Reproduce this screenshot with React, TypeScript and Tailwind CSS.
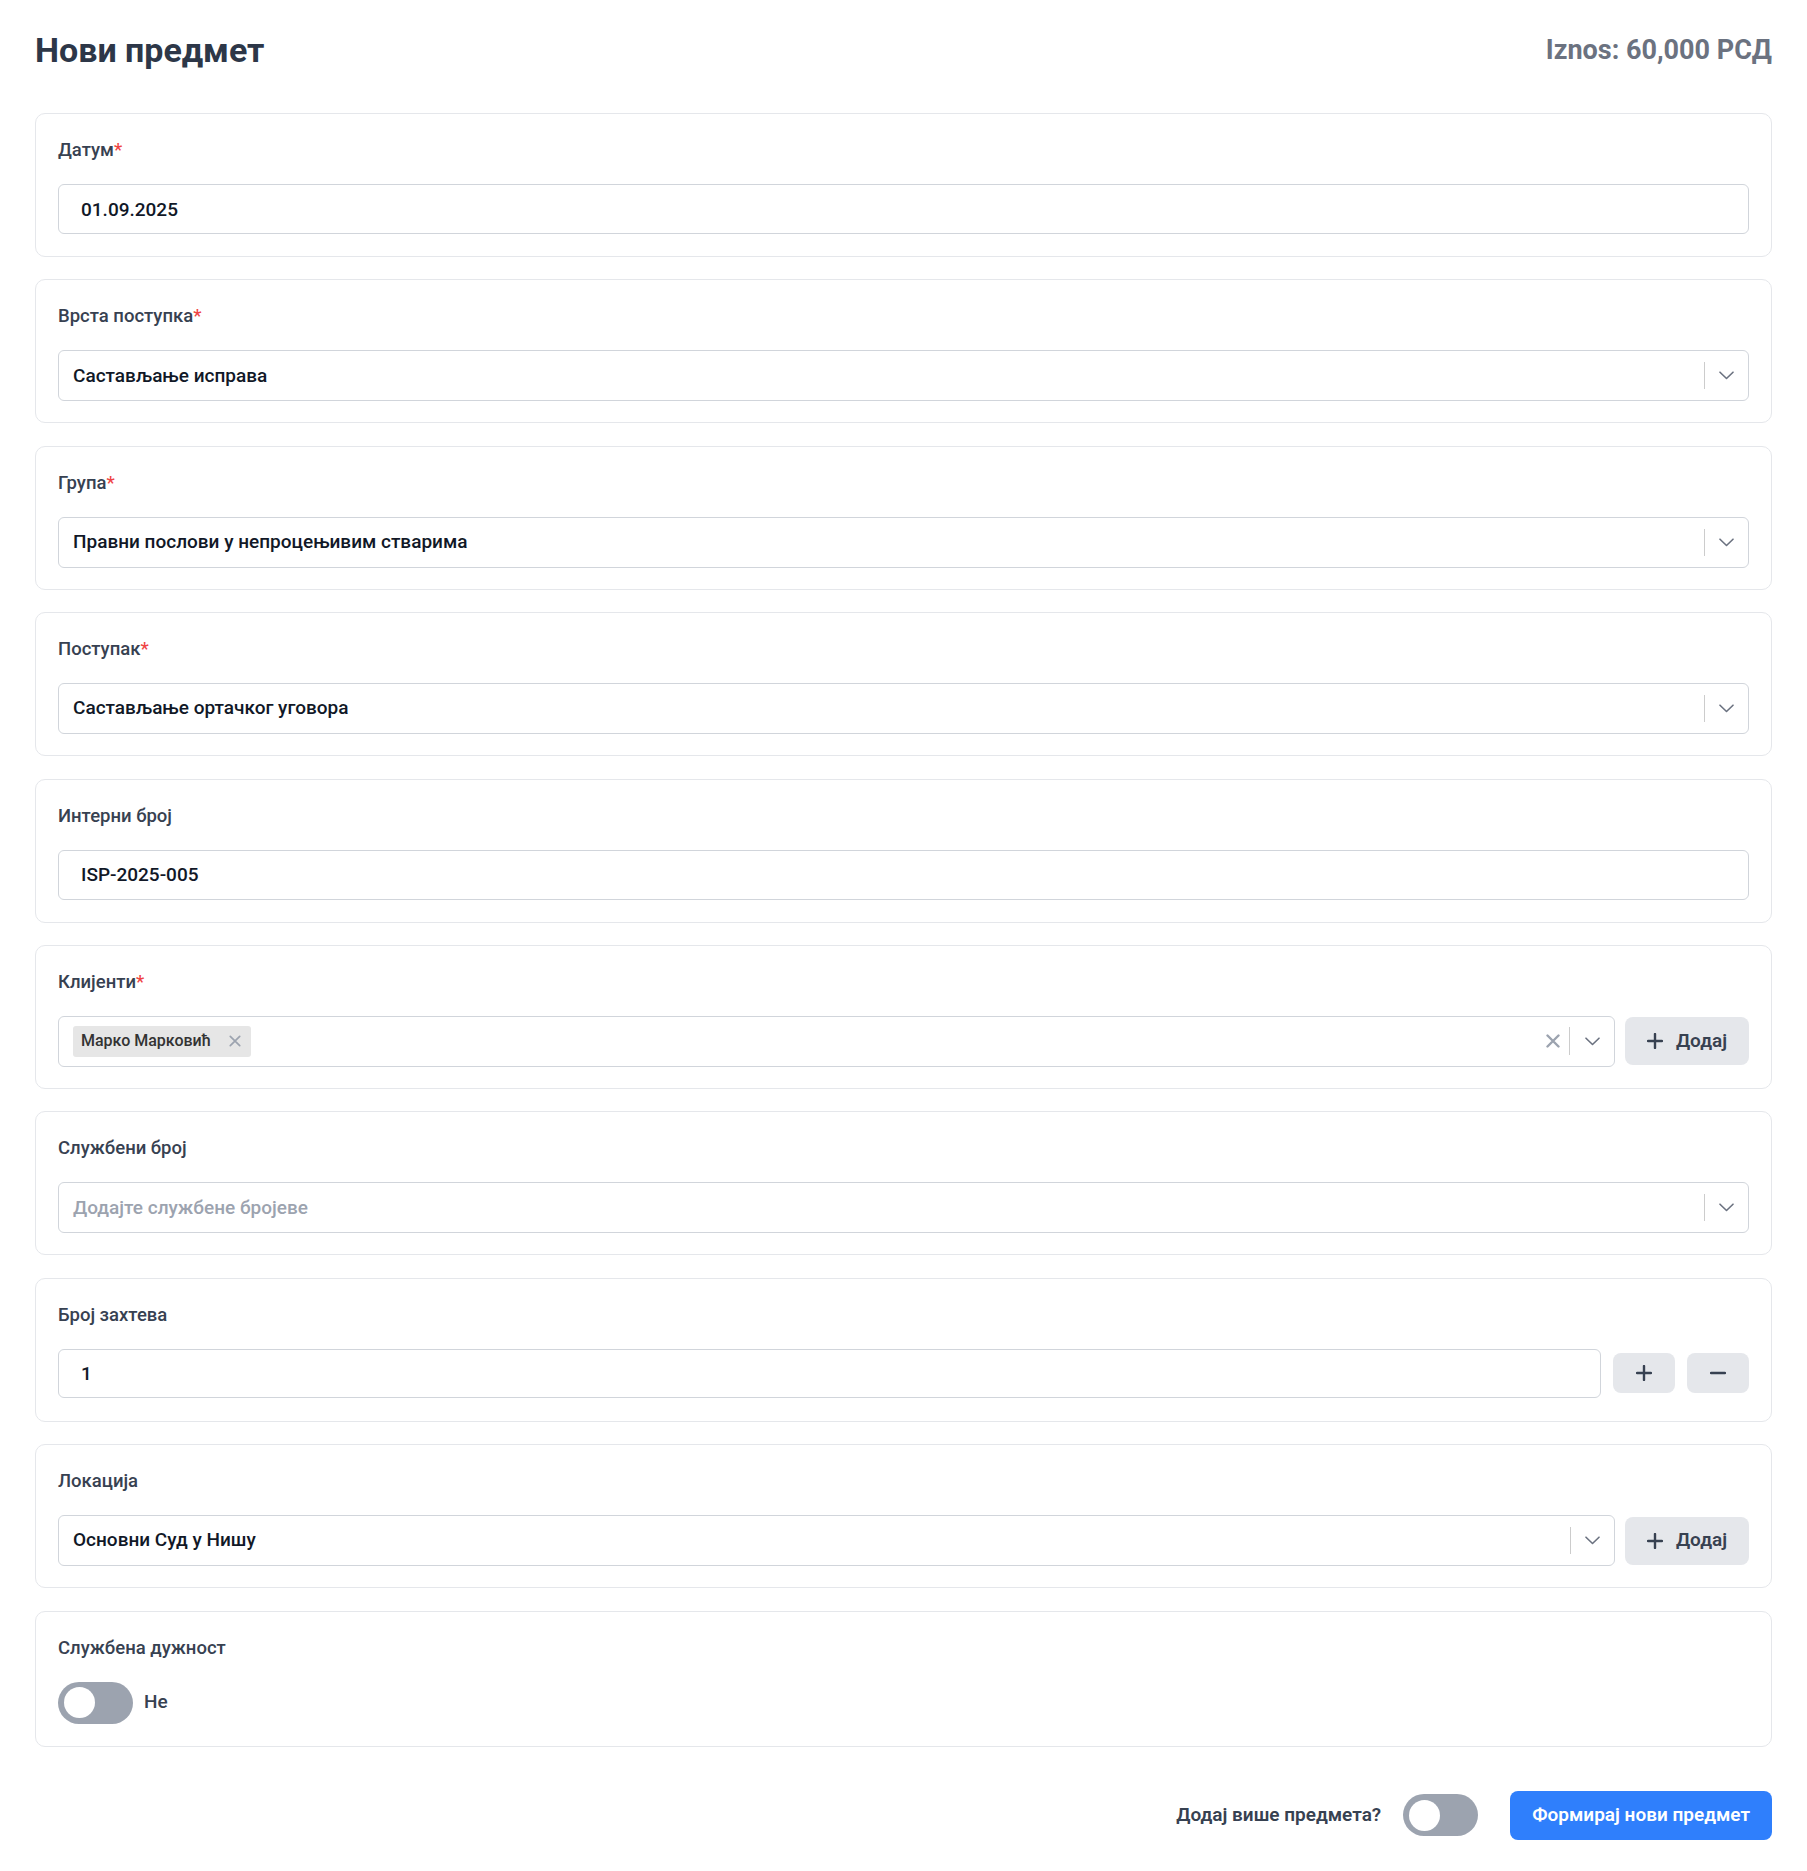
import React from "react";

function Chevron() {
  return (
    <svg width="15" height="9" viewBox="0 0 15 9" fill="none">
      <path d="M1 1.2l6.5 6.3 6.5-6.3" stroke="#6b7280" strokeWidth="1.6" strokeLinecap="round" strokeLinejoin="round" />
    </svg>
  );
}

function XIcon({ size = 14, stroke = "#9ca3af", width = 2.2 }: { size?: number; stroke?: string; width?: number }) {
  return (
    <svg width={size} height={size} viewBox="0 0 14 14" fill="none">
      <path d="M1.5 1.5l11 11M12.5 1.5l-11 11" stroke={stroke} strokeWidth={width} strokeLinecap="round" />
    </svg>
  );
}

function PlusIcon() {
  return (
    <svg width="16" height="16" viewBox="0 0 16 16" fill="none">
      <path d="M8 1v14M1 8h14" stroke="#374151" strokeWidth="2.4" strokeLinecap="round" />
    </svg>
  );
}

function MinusIcon() {
  return (
    <svg width="16" height="16" viewBox="0 0 16 16" fill="none">
      <path d="M1 8h14" stroke="#374151" strokeWidth="2.4" strokeLinecap="round" />
    </svg>
  );
}

function Card({
  label,
  required,
  compact,
  children,
}: {
  label: string;
  required?: boolean;
  compact?: boolean;
  children: React.ReactNode;
}) {
  return (
    <div
      className={
        compact
          ? "min-h-[136px] rounded-[10px] border border-[#e5e7eb] bg-white px-[22px] pt-[23px] pb-[21px]"
          : "min-h-[144px] rounded-[10px] border border-[#e5e7eb] bg-white px-[22px] pt-[23px] pb-[21px]"
      }
    >
      <div className="mb-[21px] h-[26px] text-[18.5px] font-medium leading-[26px] text-[#374151]">
        {label}
        {required && <span className="text-[#ef4444]">*</span>}
      </div>
      {children}
    </div>
  );
}

function TextInput({ value }: { value: string }) {
  return (
    <input
      readOnly
      defaultValue={value}
      className="h-[50px] w-full rounded-[6px] border border-[#d1d5db] bg-white px-[22px] text-[19px] font-medium text-[#111827] outline-none"
    />
  );
}

function Select({ value, placeholder }: { value?: string; placeholder?: string }) {
  return (
    <div className="flex h-[51px] w-full items-center rounded-[6px] border border-[#d1d5db] bg-white">
      <div
        className={
          value
            ? "flex-1 truncate pl-[14px] text-[19px] font-medium text-[#111827]"
            : "flex-1 truncate pl-[14px] text-[19px] font-medium text-[#9ca3af]"
        }
      >
        {value ?? placeholder}
      </div>
      <div className="h-[27px] w-px bg-[#cccccc]" />
      <div className="flex w-[43px] justify-center">
        <Chevron />
      </div>
    </div>
  );
}

function AddButton() {
  return (
    <button className="flex h-[48px] w-[124px] shrink-0 items-center justify-center gap-[13px] rounded-[8px] bg-[#e5e7eb] text-[19px] font-semibold text-[#374151]">
      <PlusIcon />
      <span>Додај</span>
    </button>
  );
}

function Toggle() {
  return (
    <div className="flex h-[42px] w-[75px] shrink-0 items-center rounded-full bg-[#9ca3af] pl-[6px]">
      <div className="h-[31px] w-[31px] rounded-full bg-white" />
    </div>
  );
}

export default function App() {
  return (
    <div className="min-h-screen bg-white px-[35px] pt-[28px] pb-[31px] font-['Roboto',sans-serif]">
      <div className="mb-[41px] flex items-start justify-between">
        <h1 className="text-[34px] font-bold leading-[44px] text-[#2d3748]">Нови предмет</h1>
        <div className="text-[27px] font-bold leading-[44px] text-[#6b7280]">Iznos: 60,000 РСД</div>
      </div>

      <div className="flex flex-col gap-[22.4px]">
        <Card label="Датум" required>
          <TextInput value="01.09.2025" />
        </Card>

        <Card label="Врста поступка" required>
          <Select value="Састављање исправа" />
        </Card>

        <Card label="Група" required>
          <Select value="Правни послови у непроцењивим стварима" />
        </Card>

        <Card label="Поступак" required>
          <Select value="Састављање ортачког уговора" />
        </Card>

        <Card label="Интерни број">
          <TextInput value="ISP-2025-005" />
        </Card>

        <Card label="Клијенти" required>
          <div className="flex items-center gap-[10px]">
            <div className="flex h-[51px] flex-1 items-center rounded-[6px] border border-[#d1d5db] bg-white">
              <div className="flex flex-1 items-center pl-[14px]">
                <div className="flex h-[31px] items-center rounded-[3px] bg-[#e6e6e6] pl-[8px] pr-[10px]">
                  <span className="text-[16px] font-medium text-[#333333]">Марко Марковић</span>
                  <span className="ml-[18px] flex items-center">
                    <XIcon size={12} width={2} />
                  </span>
                </div>
              </div>
              <div className="flex w-[33px] justify-center">
                <XIcon size={14} width={2.4} />
              </div>
              <div className="h-[28px] w-px bg-[#cccccc]" />
              <div className="flex w-[44px] justify-center">
                <Chevron />
              </div>
            </div>
            <AddButton />
          </div>
        </Card>

        <Card label="Службени број">
          <Select placeholder="Додајте службене бројеве" />
        </Card>

        <Card label="Број захтева">
          <div className="flex items-center gap-[12px]">
            <input
              readOnly
              defaultValue="1"
              className="h-[49px] min-w-0 flex-1 rounded-[6px] border border-[#d1d5db] bg-white px-[22px] text-[19px] font-medium text-[#111827] outline-none"
            />
            <button className="flex h-[40px] w-[62px] shrink-0 items-center justify-center rounded-[8px] bg-[#e5e7eb]">
              <PlusIcon />
            </button>
            <button className="flex h-[40px] w-[62px] shrink-0 items-center justify-center rounded-[8px] bg-[#e5e7eb]">
              <MinusIcon />
            </button>
          </div>
        </Card>

        <Card label="Локација">
          <div className="flex items-center gap-[10px]">
            <div className="flex-1">
              <Select value="Основни Суд у Нишу" />
            </div>
            <AddButton />
          </div>
        </Card>

        <Card label="Службена дужност" compact>
          <div className="flex items-center gap-[11px]">
            <Toggle />
            <span className="text-[19px] font-medium text-[#374151]">Не</span>
          </div>
        </Card>
      </div>

      <div className="mt-[44px] flex items-center justify-end">
        <span className="mr-[22px] text-[19px] font-semibold text-[#374151]">Додај више предмета?</span>
        <Toggle />
        <button className="ml-[32px] h-[49px] rounded-[8px] bg-[#2f7ffc] px-[22px] text-[19px] font-semibold text-white">
          Формирај нови предмет
        </button>
      </div>
    </div>
  );
}
